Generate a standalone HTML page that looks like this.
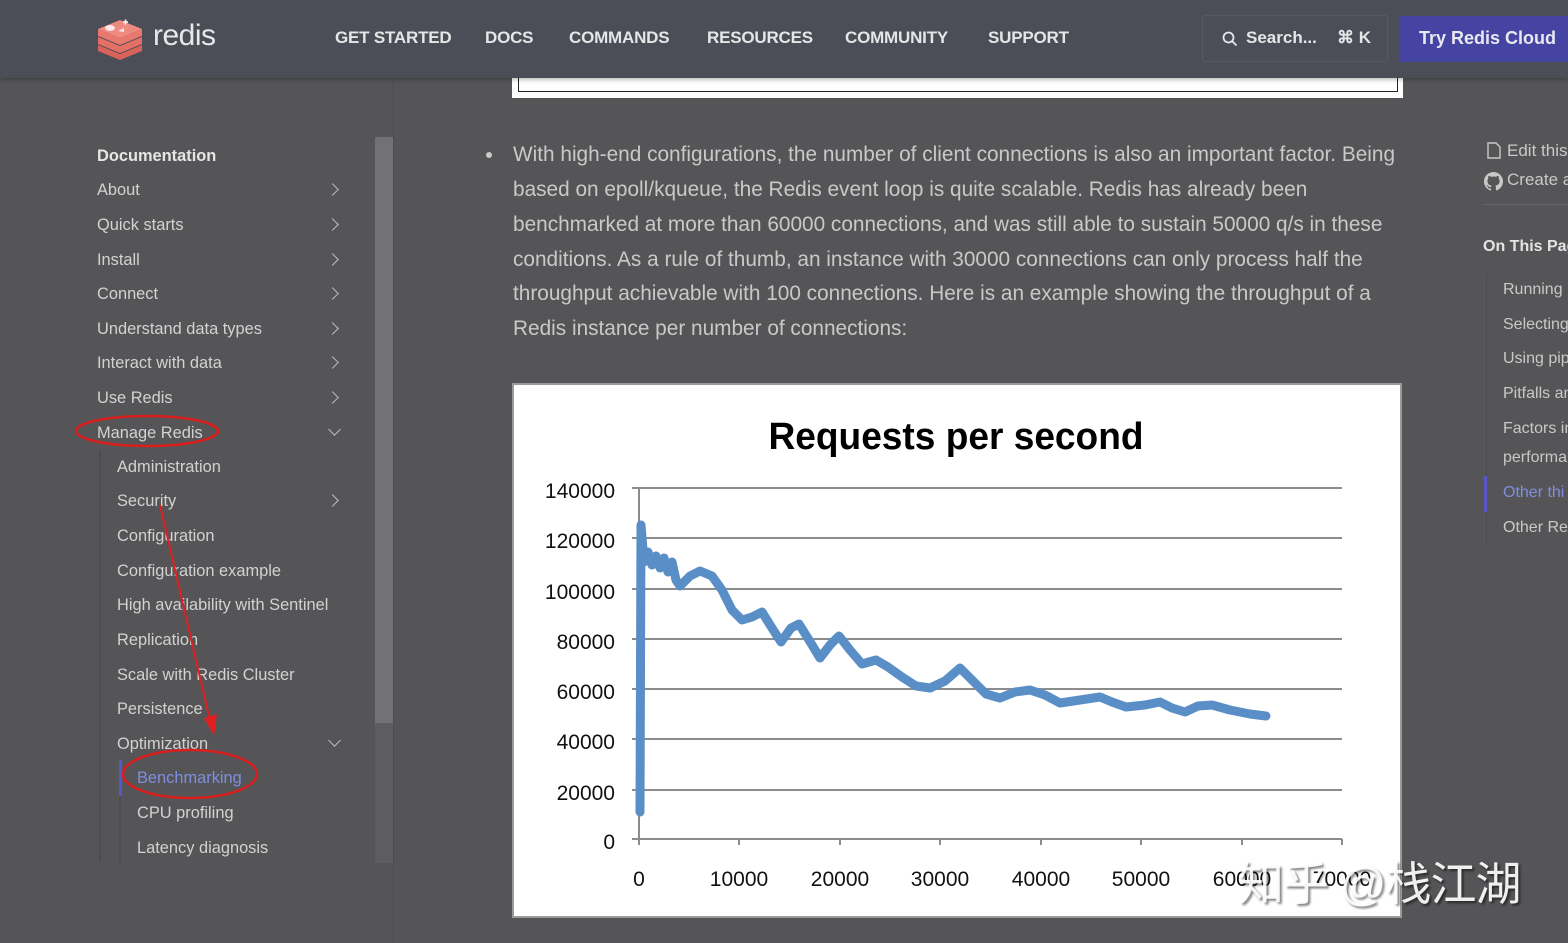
<!DOCTYPE html>
<html><head><meta charset="utf-8"><style>
*{margin:0;padding:0;box-sizing:border-box}
body{width:1568px;height:943px;background:#555557;font-family:"Liberation Sans",sans-serif;position:relative;overflow:hidden}
.a{position:absolute;white-space:nowrap}
.hdr{position:absolute;left:0;top:0;width:1568px;height:78px;background:#4b4e57;box-shadow:0 2px 4px rgba(0,0,0,.25);z-index:5}
.nav{top:28px;font-size:17px;color:#e6e6e8;font-weight:bold;letter-spacing:-.2px}
.sb{font-size:16.4px;color:#d2d2d2;line-height:20px}
.chev{position:absolute;width:9px;height:9px;border-right:1.5px solid #bdbdbd;border-top:1.5px solid #bdbdbd;transform:rotate(45deg)}
.chd{position:absolute;width:9px;height:9px;border-right:1.5px solid #bdbdbd;border-bottom:1.5px solid #bdbdbd;transform:rotate(45deg)}
.p{font-size:20.8px;color:#c9c9c9;left:513px}
.r{font-size:16px;color:#c9c9c9;left:1503px}
</style></head><body>
<div class="hdr">
  <svg class="a" style="left:96px;top:18px" width="48" height="42" viewBox="0 0 48 42">
    <path d="M2 27 L24 36 L46 27 L46 33 L24 42 L2 33Z" fill="#d9625a"/>
    <path d="M2 19 L24 28 L46 19 L46 26 L24 35 L2 26Z" fill="#e46f66"/>
    <path d="M2 11 L24 20 L46 11 L46 18 L24 27 L2 18Z" fill="#e8776e"/>
    <path d="M2 11 L24 2 L46 11 L24 20Z" fill="#ef8a80"/>
    <ellipse cx="14" cy="10" rx="5" ry="3" fill="#fff" opacity=".8"/>
    <path d="M27 4h5M29.5 1.5v5" stroke="#fff" stroke-width="1.6"/>
    <path d="M22 13 l6-3 0 4z" fill="#fff" opacity=".8"/>
  </svg>
  <div class="a" style="left:153px;top:19px;font-size:30px;color:#e8e8ea;letter-spacing:-.5px">redis</div>
  <div class="a nav" style="left:335px">GET STARTED</div>
  <div class="a nav" style="left:485px">DOCS</div>
  <div class="a nav" style="left:569px">COMMANDS</div>
  <div class="a nav" style="left:707px">RESOURCES</div>
  <div class="a nav" style="left:845px">COMMUNITY</div>
  <div class="a nav" style="left:988px">SUPPORT</div>
  <div class="a" style="left:1202px;top:15px;width:186px;height:47px;border:1px solid #565963;border-radius:3px"></div>
  <svg class="a" style="left:1222px;top:31px" width="16" height="16" viewBox="0 0 16 16"><circle cx="6.5" cy="6.5" r="5" fill="none" stroke="#e6e6e8" stroke-width="1.8"/><path d="M10 10l4.5 4.5" stroke="#e6e6e8" stroke-width="1.8"/></svg>
  <div class="a" style="left:1246px;top:28px;font-size:17px;color:#e6e6e8;font-weight:bold">Search...</div>
  <div class="a" style="left:1337px;top:28px;font-size:17px;color:#e6e6e8;font-weight:bold">⌘ K</div>
  <div class="a" style="left:1399px;top:16px;width:169px;height:46px;background:#4544a3"></div>
  <div class="a" style="left:1419px;top:28px;font-size:18px;color:#e8e8f0;font-weight:bold">Try Redis Cloud</div>
</div>
<!-- sidebar -->
<div class="a" style="left:393px;top:78px;width:1px;height:865px;background:#4d4d4f"></div>
<div class="a" style="left:375px;top:137px;width:18px;height:726px;background:#5d5d5f"></div>
<div class="a" style="left:375px;top:137px;width:18px;height:586px;background:#727274"></div>
<div class="a" style="left:99px;top:450px;width:2px;height:412px;background:#4e4e50"></div>
<div class="a" style="left:119px;top:760px;width:2px;height:102px;background:#4e4e50"></div>
<div class="a" style="left:119px;top:760px;width:3px;height:36px;background:#5a55c8"></div>
<div class="a sb" style="left:97px;top:146px;font-weight:bold;color:#e6e6e6">Documentation</div>
<div class="a sb" style="left:97px;top:180px">About</div><div class="chev" style="left:328px;top:185px"></div>
<div class="a sb" style="left:97px;top:215px">Quick starts</div><div class="chev" style="left:328px;top:220px"></div>
<div class="a sb" style="left:97px;top:250px">Install</div><div class="chev" style="left:328px;top:255px"></div>
<div class="a sb" style="left:97px;top:284px">Connect</div><div class="chev" style="left:328px;top:289px"></div>
<div class="a sb" style="left:97px;top:319px">Understand data types</div><div class="chev" style="left:328px;top:324px"></div>
<div class="a sb" style="left:97px;top:353px">Interact with data</div><div class="chev" style="left:328px;top:358px"></div>
<div class="a sb" style="left:97px;top:388px">Use Redis</div><div class="chev" style="left:328px;top:393px"></div>
<div class="a sb" style="left:97px;top:423px">Manage Redis</div><div class="chd" style="left:330px;top:425px"></div>
<div class="a sb" style="left:117px;top:457px">Administration</div>
<div class="a sb" style="left:117px;top:491px">Security</div><div class="chev" style="left:328px;top:496px"></div>
<div class="a sb" style="left:117px;top:526px">Configuration</div>
<div class="a sb" style="left:117px;top:561px">Configuration example</div>
<div class="a sb" style="left:117px;top:595px">High availability with Sentinel</div>
<div class="a sb" style="left:117px;top:630px">Replication</div>
<div class="a sb" style="left:117px;top:665px">Scale with Redis Cluster</div>
<div class="a sb" style="left:117px;top:699px">Persistence</div>
<div class="a sb" style="left:117px;top:734px">Optimization</div><div class="chd" style="left:330px;top:736px"></div>
<div class="a sb" style="left:137px;top:768px;color:#7f8ee0">Benchmarking</div>
<div class="a sb" style="left:137px;top:803px">CPU profiling</div>
<div class="a sb" style="left:137px;top:838px">Latency diagnosis</div>
<!-- red annotations -->
<svg class="a" style="left:0;top:0;z-index:3" width="400" height="943">
  <ellipse cx="147" cy="431" rx="71" ry="15" fill="none" stroke="#d91e1e" stroke-width="2.5"/>
  <ellipse cx="190" cy="774" rx="67" ry="24" fill="none" stroke="#d91e1e" stroke-width="2.5"/>
  <path d="M160 505 L211 725" stroke="#e02020" stroke-width="2"/>
  <path d="M204 718 L214 736 L217 714Z" fill="#e02020"/>
</svg>
<!-- main content -->
<div class="a" style="left:512px;top:70px;width:891px;height:28px;background:#fff"></div>
<div class="a" style="left:518px;top:70px;width:880px;height:22px;border:1.5px solid #222;border-top:none"></div>
<div class="a" style="left:486px;top:152px;width:6px;height:6px;border-radius:50%;background:#c9c9c9"></div>
<div class="a p" style="top:143px">With high-end configurations, the number of client connections is also an important factor. Being</div>
<div class="a p" style="top:178px">based on epoll/kqueue, the Redis event loop is quite scalable. Redis has already been</div>
<div class="a p" style="top:213px">benchmarked at more than 60000 connections, and was still able to sustain 50000 q/s in these</div>
<div class="a p" style="top:248px">conditions. As a rule of thumb, an instance with 30000 connections can only process half the</div>
<div class="a p" style="top:282px">throughput achievable with 100 connections. Here is an example showing the throughput of a</div>
<div class="a p" style="top:317px">Redis instance per number of connections:</div>
<svg class="a" style="left:512px;top:383px" width="891" height="536" viewBox="512 383 891 536" font-family="Liberation Sans Narrow, Liberation Sans, sans-serif">
  <rect x="513" y="384" width="888" height="533" fill="#fff" stroke="#9a9a9a" stroke-width="2"/>
  <text x="956" y="449" text-anchor="middle" font-size="38" font-weight="bold" fill="#000" font-family="Liberation Sans, sans-serif" textLength="375" lengthAdjust="spacingAndGlyphs">Requests per second</text>
  <g stroke="#8c8c8c" stroke-width="2">
    <path d="M632 488H1342M632 538H1342M632 589H1342M632 639H1342M632 689H1342M632 739H1342M632 790H1342M632 839H1342"/>
    <path d="M639 488V845M739 839v6M840 839v6M940 839v6M1041 839v6M1141 839v6M1242 839v6M1342 839v6"/>
  </g>
  <g font-size="21" fill="#111" text-anchor="end">
    <text x="615" y="498">140000</text><text x="615" y="548">120000</text><text x="615" y="599">100000</text><text x="615" y="649">80000</text><text x="615" y="699">60000</text><text x="615" y="749">40000</text><text x="615" y="800">20000</text><text x="615" y="849">0</text>
  </g>
  <g font-size="21" fill="#111" text-anchor="middle">
    <text x="639" y="886">0</text><text x="739" y="886">10000</text><text x="840" y="886">20000</text><text x="940" y="886">30000</text><text x="1041" y="886">40000</text><text x="1141" y="886">50000</text><text x="1242" y="886">60000</text><text x="1342" y="886">70000</text>
  </g>
  <path d="M640 812 L641 525 L644 562 L648 552 L652 565 L656 556 L660 568 L664 558 L668 572 L672 562 L676 580 L680 586 L690 576 L700 571 L712 576 L722 590 L732 610 L742 620 L752 617 L762 612 L772 628 L781 642 L791 628 L799 624 L809 640 L820 658 L830 645 L839 636 L850 650 L862 664 L876 660 L888 667 L902 677 L916 686 L930 688 L945 681 L960 668 L972 680 L986 694 L1000 698 L1015 692 L1030 690 L1045 695 L1060 703 L1080 700 L1100 697 L1112 702 L1126 707 L1145 705 L1160 702 L1172 708 L1185 712 L1198 706 L1212 705 L1230 710 L1250 714 L1266 716" fill="none" stroke="#5a8ec6" stroke-width="9" stroke-linejoin="round" stroke-linecap="round"/>
</svg>
<!-- right column -->
<svg class="a" style="left:1486px;top:142px" width="16" height="18" viewBox="0 0 16 18"><path d="M2 1h8l4 4v11H2Z" fill="none" stroke="#c9c9c9" stroke-width="1.4"/></svg>
<div class="a r" style="left:1507px;top:141px;font-size:17px">Edit this</div>
<svg class="a" style="left:1484px;top:172px" width="19" height="19" viewBox="0 0 16 16"><path fill="#c9c9c9" d="M8 0C3.6 0 0 3.6 0 8c0 3.5 2.3 6.5 5.5 7.6.4.1.5-.2.5-.4v-1.4c-2.2.5-2.7-1-2.7-1-.4-.9-.9-1.2-.9-1.2-.7-.5.1-.5.1-.5.8.1 1.2.8 1.2.8.7 1.2 1.9.9 2.3.7.1-.5.3-.9.5-1.1-1.8-.2-3.600-.9-3.6-4 0-.9.3-1.6.8-2.1-.1-.2-.4-1 .1-2.1 0 0 .7-.2 2.2.8.6-.2 1.3-.3 2-.3s1.4.1 2 .3c1.5-1 2.2-.8 2.2-.8.4 1.1.2 1.9.1 2.1.5.6.8 1.3.8 2.1 0 3.1-1.9 3.7-3.6 3.9.3.3.5.8.5 1.5v2.2c0 .2.1.5.6.4C13.7 14.5 16 11.5 16 8c0-4.4-3.6-8-8-8z"/></svg>
<div class="a r" style="left:1507px;top:170px;font-size:17px">Create a</div>
<div class="a" style="left:1483px;top:204px;width:85px;height:1px;background:#666"></div>
<div class="a" style="left:1483px;top:238px;font-size:16px;font-weight:bold;color:#e4e4e4">On This Page</div>
<div class="a" style="left:1486px;top:273px;width:1px;height:272px;background:#4c4c4e"></div>
<div class="a" style="left:1484px;top:476px;width:3px;height:36px;background:#5a55c8"></div>
<div class="a r" style="top:281px">Running</div>
<div class="a r" style="top:316px">Selecting</div>
<div class="a r" style="top:350px">Using pip</div>
<div class="a r" style="top:385px">Pitfalls an</div>
<div class="a r" style="top:420px">Factors in</div>
<div class="a r" style="top:449px">performa</div>
<div class="a r" style="top:484px;color:#7f8ee0">Other thi</div>
<div class="a r" style="top:519px">Other Re</div>
<!-- watermark -->
<div class="a" style="left:1238px;top:848px;font-size:46px;color:rgba(255,255,255,.92);font-family:'Liberation Sans','Noto Sans CJK SC',sans-serif;text-shadow:2px 2px 2px rgba(0,0,0,.5);z-index:6;letter-spacing:-1px">知乎 @栈江湖</div>
</body></html>
